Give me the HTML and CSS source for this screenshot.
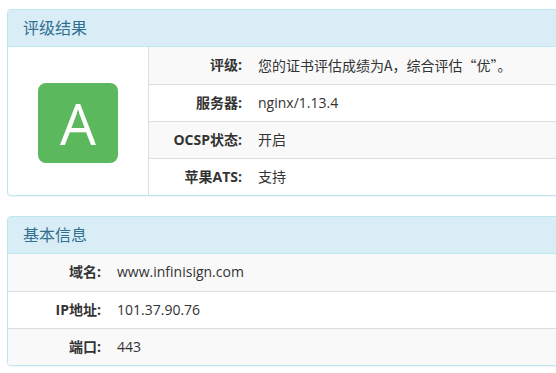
FILE: index.html
```html
<!DOCTYPE html>
<html lang="zh-CN">
<head>
  <meta charset="UTF-8" />
  <meta name="viewport" content="width=device-width, initial-scale=1.0"/>
  <title>SSL 检测结果</title>
  <link rel="stylesheet" href="styles.css">
</head>
<body>
  <div class="page">
    <!-- 评级结果 -->
    <div class="panel">
      <div class="panel-heading">评级结果</div>
      <div class="grade-body">
        <div class="grade-cell">
          <div class="grade-badge">A</div>
        </div>
        <table class="info-table">
          <tr><th>评级:</th><td class="cjk">您的证书评估成绩为A，综合评估“优”。</td></tr>
          <tr><th>服务器:</th><td>nginx/1.13.4</td></tr>
          <tr><th>OCSP状态:</th><td>开启</td></tr>
          <tr><th>苹果ATS:</th><td>支持</td></tr>
        </table>
      </div>
    </div>

    <!-- 基本信息 -->
    <div class="panel">
      <div class="panel-heading">基本信息</div>
      <table class="info-table">
        <tr><th>域名:</th><td>www.infinisign.com</td></tr>
        <tr><th>IP地址:</th><td>101.37.90.76</td></tr>
        <tr><th>端口:</th><td>443</td></tr>
      </table>
    </div>
  </div>
</body>
</html>
```

FILE: styles.css
```css
* {
  box-sizing: border-box;
  margin: 0;
  padding: 0;
}

body {
  font-family: "Open Sans", "Noto Sans CJK SC", sans-serif;
  font-size: 14px;
  line-height: 20px;
  color: #333;
  background-color: #fff;
  overflow: hidden;
}

.page {
  width: 620px;
  padding: 9px 0 0 7px;
}

.panel {
  border: 1px solid #bce8f1;
  border-radius: 4px;
  background-color: #fff;
  margin-bottom: 20px;
  overflow: hidden;
  box-shadow: 0 1px 1px rgba(0, 0, 0, 0.05);
}

.panel-heading {
  background-color: #d9edf7;
  color: #31708f;
  border-bottom: 1px solid #bce8f1;
  padding: 8px 15px;
  font-size: 16px;
  line-height: 20px;
}

/* Grade block */
.grade-body {
  display: flex;
}

.grade-cell {
  width: 141px;
  flex-shrink: 0;
  border-right: 1px solid #ddd;
  display: flex;
  align-items: center;
  justify-content: center;
  padding-top: 4px;
}

.grade-badge {
  width: 80px;
  height: 80px;
  border-radius: 8px;
  background-color: #5cb85c;
  color: #fff;
  font-size: 57px;
  line-height: 80px;
  text-align: center;
}

/* Tables */
.info-table {
  flex: 1;
  width: 100%;
  border-collapse: collapse;
}

.info-table tr:nth-child(odd) {
  background-color: #f9f9f9;
}

.info-table tr + tr th,
.info-table tr + tr td {
  border-top: 1px solid #ddd;
}

.info-table th,
.info-table td {
  padding: 8px;
  height: 37px;
  vertical-align: middle;
}

.info-table th {
  width: 101px;
  text-align: right;
  font-weight: bold;
  white-space: nowrap;
}

.info-table td {
  text-align: left;
}

.info-table td.cjk {
  font-family: "Noto Sans CJK SC", sans-serif;
}
```
